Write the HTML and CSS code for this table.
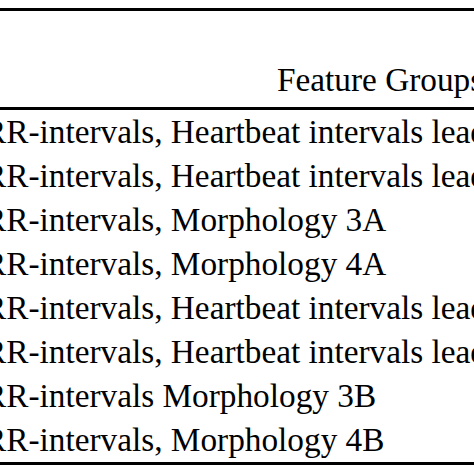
FILE: index.html
```html
<!DOCTYPE html>
<html>
<head>
<meta charset="utf-8">
<link rel="stylesheet" href="styles.css">
</head>
<body>
<div class="sheet">
  <div class="rule rule-top"></div>
  <div class="head"><span class="head-text">Feature Groups</span></div>
  <div class="rule rule-mid"></div>
  <div class="rows">
    <div class="row">RR-intervals, Heartbeat intervals lead I, II</div>
    <div class="row">RR-intervals, Heartbeat intervals lead I, II</div>
    <div class="row">RR-intervals, Morphology 3A</div>
    <div class="row">RR-intervals, Morphology 4A</div>
    <div class="row">RR-intervals, Heartbeat intervals lead I, II</div>
    <div class="row">RR-intervals, Heartbeat intervals lead I, II</div>
    <div class="row">RR-intervals Morphology 3B</div>
    <div class="row">RR-intervals, Morphology 4B</div>
  </div>
  <div class="rule rule-bottom"></div>
</div>
</body>
</html>
```
FILE: styles.css
```css
html, body {
  margin: 0;
  padding: 0;
  background: #fff;
  overflow: hidden;
  width: 474px;
  height: 474px;
}
.sheet {
  width: 474px;
  padding-top: 8px;
  font-family: "Liberation Serif", "Times New Roman", serif;
  font-size: 33.3px;
  color: #000;
  overflow: hidden;
}
.rule {
  height: 3px;
  background: #000;
}
.head {
  height: 96px;
  box-sizing: border-box;
  display: flex;
  align-items: flex-end;
  padding-bottom: 6px;
  padding-left: 277px;
  line-height: 43px;
  white-space: nowrap;
}
.rows {
  display: flex;
  flex-direction: column;
}
.row {
  height: 44px;
  line-height: 44px;
  margin-left: -16px;
  white-space: nowrap;
}
```
